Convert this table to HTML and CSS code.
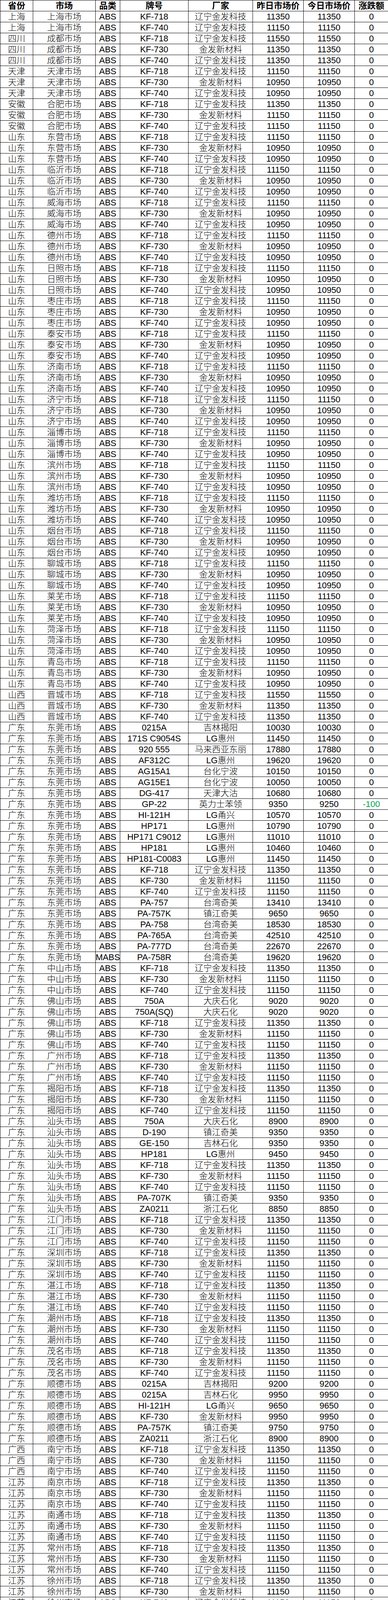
FILE: index.html
```html
<!DOCTYPE html>
<html lang="zh-CN">
<head>
<meta charset="utf-8">
<title>ABS 市场价格</title>
<link rel="stylesheet" href="styles.css">
</head>
<body>
<table class="sheet">
<colgroup><col class="c-prov"><col class="c-mkt"><col class="c-cat"><col class="c-grade"><col class="c-maker"><col class="c-price"><col class="c-price2"><col class="c-chg"></colgroup>
<thead>
<tr class="head"><th>省份</th><th>市场</th><th>品类</th><th>牌号</th><th>厂家</th><th>昨日市场价</th><th>今日市场价</th><th>涨跌额</th></tr>
</thead>
<tbody>
<tr><td>上海<td>上海市场<td>ABS<td>KF-718<td>辽宁金发科技<td>11350<td>11350<td>0
<tr><td>上海<td>上海市场<td>ABS<td>KF-740<td>辽宁金发科技<td>11150<td>11150<td>0
<tr><td>四川<td>成都市场<td>ABS<td>KF-718<td>辽宁金发科技<td>11550<td>11550<td>0
<tr><td>四川<td>成都市场<td>ABS<td>KF-730<td>金发新材料<td>11350<td>11350<td>0
<tr><td>四川<td>成都市场<td>ABS<td>KF-740<td>辽宁金发科技<td>11350<td>11350<td>0
<tr><td>天津<td>天津市场<td>ABS<td>KF-718<td>辽宁金发科技<td>11150<td>11150<td>0
<tr><td>天津<td>天津市场<td>ABS<td>KF-730<td>金发新材料<td>10950<td>10950<td>0
<tr><td>天津<td>天津市场<td>ABS<td>KF-740<td>辽宁金发科技<td>10950<td>10950<td>0
<tr><td>安徽<td>合肥市场<td>ABS<td>KF-718<td>辽宁金发科技<td>11350<td>11350<td>0
<tr><td>安徽<td>合肥市场<td>ABS<td>KF-730<td>金发新材料<td>11150<td>11150<td>0
<tr><td>安徽<td>合肥市场<td>ABS<td>KF-740<td>辽宁金发科技<td>11150<td>11150<td>0
<tr><td>山东<td>东营市场<td>ABS<td>KF-718<td>辽宁金发科技<td>11150<td>11150<td>0
<tr><td>山东<td>东营市场<td>ABS<td>KF-730<td>金发新材料<td>10950<td>10950<td>0
<tr><td>山东<td>东营市场<td>ABS<td>KF-740<td>辽宁金发科技<td>10950<td>10950<td>0
<tr><td>山东<td>临沂市场<td>ABS<td>KF-718<td>辽宁金发科技<td>11150<td>11150<td>0
<tr><td>山东<td>临沂市场<td>ABS<td>KF-730<td>金发新材料<td>10950<td>10950<td>0
<tr><td>山东<td>临沂市场<td>ABS<td>KF-740<td>辽宁金发科技<td>10950<td>10950<td>0
<tr><td>山东<td>威海市场<td>ABS<td>KF-718<td>辽宁金发科技<td>11150<td>11150<td>0
<tr><td>山东<td>威海市场<td>ABS<td>KF-730<td>金发新材料<td>10950<td>10950<td>0
<tr><td>山东<td>威海市场<td>ABS<td>KF-740<td>辽宁金发科技<td>10950<td>10950<td>0
<tr><td>山东<td>德州市场<td>ABS<td>KF-718<td>辽宁金发科技<td>11150<td>11150<td>0
<tr><td>山东<td>德州市场<td>ABS<td>KF-730<td>金发新材料<td>10950<td>10950<td>0
<tr><td>山东<td>德州市场<td>ABS<td>KF-740<td>辽宁金发科技<td>10950<td>10950<td>0
<tr><td>山东<td>日照市场<td>ABS<td>KF-718<td>辽宁金发科技<td>11150<td>11150<td>0
<tr><td>山东<td>日照市场<td>ABS<td>KF-730<td>金发新材料<td>10950<td>10950<td>0
<tr><td>山东<td>日照市场<td>ABS<td>KF-740<td>辽宁金发科技<td>10950<td>10950<td>0
<tr><td>山东<td>枣庄市场<td>ABS<td>KF-718<td>辽宁金发科技<td>11150<td>11150<td>0
<tr><td>山东<td>枣庄市场<td>ABS<td>KF-730<td>金发新材料<td>10950<td>10950<td>0
<tr><td>山东<td>枣庄市场<td>ABS<td>KF-740<td>辽宁金发科技<td>10950<td>10950<td>0
<tr><td>山东<td>泰安市场<td>ABS<td>KF-718<td>辽宁金发科技<td>11150<td>11150<td>0
<tr><td>山东<td>泰安市场<td>ABS<td>KF-730<td>金发新材料<td>10950<td>10950<td>0
<tr><td>山东<td>泰安市场<td>ABS<td>KF-740<td>辽宁金发科技<td>10950<td>10950<td>0
<tr><td>山东<td>济南市场<td>ABS<td>KF-718<td>辽宁金发科技<td>11150<td>11150<td>0
<tr><td>山东<td>济南市场<td>ABS<td>KF-730<td>金发新材料<td>10950<td>10950<td>0
<tr><td>山东<td>济南市场<td>ABS<td>KF-740<td>辽宁金发科技<td>10950<td>10950<td>0
<tr><td>山东<td>济宁市场<td>ABS<td>KF-718<td>辽宁金发科技<td>11150<td>11150<td>0
<tr><td>山东<td>济宁市场<td>ABS<td>KF-730<td>金发新材料<td>10950<td>10950<td>0
<tr><td>山东<td>济宁市场<td>ABS<td>KF-740<td>辽宁金发科技<td>10950<td>10950<td>0
<tr><td>山东<td>淄博市场<td>ABS<td>KF-718<td>辽宁金发科技<td>11150<td>11150<td>0
<tr><td>山东<td>淄博市场<td>ABS<td>KF-730<td>金发新材料<td>10950<td>10950<td>0
<tr><td>山东<td>淄博市场<td>ABS<td>KF-740<td>辽宁金发科技<td>10950<td>10950<td>0
<tr><td>山东<td>滨州市场<td>ABS<td>KF-718<td>辽宁金发科技<td>11150<td>11150<td>0
<tr><td>山东<td>滨州市场<td>ABS<td>KF-730<td>金发新材料<td>10950<td>10950<td>0
<tr><td>山东<td>滨州市场<td>ABS<td>KF-740<td>辽宁金发科技<td>10950<td>10950<td>0
<tr><td>山东<td>潍坊市场<td>ABS<td>KF-718<td>辽宁金发科技<td>11150<td>11150<td>0
<tr><td>山东<td>潍坊市场<td>ABS<td>KF-730<td>金发新材料<td>10950<td>10950<td>0
<tr><td>山东<td>潍坊市场<td>ABS<td>KF-740<td>辽宁金发科技<td>10950<td>10950<td>0
<tr><td>山东<td>烟台市场<td>ABS<td>KF-718<td>辽宁金发科技<td>11150<td>11150<td>0
<tr><td>山东<td>烟台市场<td>ABS<td>KF-730<td>金发新材料<td>10950<td>10950<td>0
<tr><td>山东<td>烟台市场<td>ABS<td>KF-740<td>辽宁金发科技<td>10950<td>10950<td>0
<tr><td>山东<td>聊城市场<td>ABS<td>KF-718<td>辽宁金发科技<td>11150<td>11150<td>0
<tr><td>山东<td>聊城市场<td>ABS<td>KF-730<td>金发新材料<td>10950<td>10950<td>0
<tr><td>山东<td>聊城市场<td>ABS<td>KF-740<td>辽宁金发科技<td>10950<td>10950<td>0
<tr><td>山东<td>莱芜市场<td>ABS<td>KF-718<td>辽宁金发科技<td>11150<td>11150<td>0
<tr><td>山东<td>莱芜市场<td>ABS<td>KF-730<td>金发新材料<td>10950<td>10950<td>0
<tr><td>山东<td>莱芜市场<td>ABS<td>KF-740<td>辽宁金发科技<td>10950<td>10950<td>0
<tr><td>山东<td>菏泽市场<td>ABS<td>KF-718<td>辽宁金发科技<td>11150<td>11150<td>0
<tr><td>山东<td>菏泽市场<td>ABS<td>KF-730<td>金发新材料<td>10950<td>10950<td>0
<tr><td>山东<td>菏泽市场<td>ABS<td>KF-740<td>辽宁金发科技<td>10950<td>10950<td>0
<tr><td>山东<td>青岛市场<td>ABS<td>KF-718<td>辽宁金发科技<td>11150<td>11150<td>0
<tr><td>山东<td>青岛市场<td>ABS<td>KF-730<td>金发新材料<td>10950<td>10950<td>0
<tr><td>山东<td>青岛市场<td>ABS<td>KF-740<td>辽宁金发科技<td>10950<td>10950<td>0
<tr><td>山西<td>晋城市场<td>ABS<td>KF-718<td>辽宁金发科技<td>11550<td>11550<td>0
<tr><td>山西<td>晋城市场<td>ABS<td>KF-730<td>金发新材料<td>11350<td>11350<td>0
<tr><td>山西<td>晋城市场<td>ABS<td>KF-740<td>辽宁金发科技<td>11350<td>11350<td>0
<tr><td>广东<td>东莞市场<td>ABS<td>0215A<td>吉林揭阳<td>10030<td>10030<td>0
<tr><td>广东<td>东莞市场<td>ABS<td>171S C9054S<td>LG惠州<td>11450<td>11450<td>0
<tr><td>广东<td>东莞市场<td>ABS<td>920 555<td>马来西亚东丽<td>17880<td>17880<td>0
<tr><td>广东<td>东莞市场<td>ABS<td>AF312C<td>LG惠州<td>19620<td>19620<td>0
<tr><td>广东<td>东莞市场<td>ABS<td>AG15A1<td>台化宁波<td>10150<td>10150<td>0
<tr><td>广东<td>东莞市场<td>ABS<td>AG15E1<td>台化宁波<td>10050<td>10050<td>0
<tr><td>广东<td>东莞市场<td>ABS<td>DG-417<td>天津大沽<td>10680<td>10680<td>0
<tr><td>广东<td>东莞市场<td>ABS<td>GP-22<td>英力士苯领<td>9350<td>9250<td class="down">-100
<tr><td>广东<td>东莞市场<td>ABS<td>HI-121H<td>LG甬兴<td>10570<td>10570<td>0
<tr><td>广东<td>东莞市场<td>ABS<td>HP171<td>LG惠州<td>10790<td>10790<td>0
<tr><td>广东<td>东莞市场<td>ABS<td>HP171 C9012<td>LG惠州<td>11010<td>11010<td>0
<tr><td>广东<td>东莞市场<td>ABS<td>HP181<td>LG惠州<td>10460<td>10460<td>0
<tr><td>广东<td>东莞市场<td>ABS<td>HP181-C0083<td>LG惠州<td>11450<td>11450<td>0
<tr><td>广东<td>东莞市场<td>ABS<td>KF-718<td>辽宁金发科技<td>11350<td>11350<td>0
<tr><td>广东<td>东莞市场<td>ABS<td>KF-730<td>金发新材料<td>11150<td>11150<td>0
<tr><td>广东<td>东莞市场<td>ABS<td>KF-740<td>辽宁金发科技<td>11150<td>11150<td>0
<tr><td>广东<td>东莞市场<td>ABS<td>PA-757<td>台湾奇美<td>13410<td>13410<td>0
<tr><td>广东<td>东莞市场<td>ABS<td>PA-757K<td>镇江奇美<td>9650<td>9650<td>0
<tr><td>广东<td>东莞市场<td>ABS<td>PA-758<td>台湾奇美<td>18530<td>18530<td>0
<tr><td>广东<td>东莞市场<td>ABS<td>PA-765A<td>台湾奇美<td>42510<td>42510<td>0
<tr><td>广东<td>东莞市场<td>ABS<td>PA-777D<td>台湾奇美<td>22670<td>22670<td>0
<tr><td>广东<td>东莞市场<td>MABS<td>PA-758R<td>台湾奇美<td>19620<td>19620<td>0
<tr><td>广东<td>中山市场<td>ABS<td>KF-718<td>辽宁金发科技<td>11350<td>11350<td>0
<tr><td>广东<td>中山市场<td>ABS<td>KF-730<td>金发新材料<td>11150<td>11150<td>0
<tr><td>广东<td>中山市场<td>ABS<td>KF-740<td>辽宁金发科技<td>11150<td>11150<td>0
<tr><td>广东<td>佛山市场<td>ABS<td>750A<td>大庆石化<td>9020<td>9020<td>0
<tr><td>广东<td>佛山市场<td>ABS<td>750A(SQ)<td>大庆石化<td>9020<td>9020<td>0
<tr><td>广东<td>佛山市场<td>ABS<td>KF-718<td>辽宁金发科技<td>11350<td>11350<td>0
<tr><td>广东<td>佛山市场<td>ABS<td>KF-730<td>金发新材料<td>11150<td>11150<td>0
<tr><td>广东<td>佛山市场<td>ABS<td>KF-740<td>辽宁金发科技<td>11150<td>11150<td>0
<tr><td>广东<td>广州市场<td>ABS<td>KF-718<td>辽宁金发科技<td>11350<td>11350<td>0
<tr><td>广东<td>广州市场<td>ABS<td>KF-730<td>金发新材料<td>11150<td>11150<td>0
<tr><td>广东<td>广州市场<td>ABS<td>KF-740<td>辽宁金发科技<td>11150<td>11150<td>0
<tr><td>广东<td>揭阳市场<td>ABS<td>KF-718<td>辽宁金发科技<td>11350<td>11350<td>0
<tr><td>广东<td>揭阳市场<td>ABS<td>KF-730<td>金发新材料<td>11150<td>11150<td>0
<tr><td>广东<td>揭阳市场<td>ABS<td>KF-740<td>辽宁金发科技<td>11150<td>11150<td>0
<tr><td>广东<td>汕头市场<td>ABS<td>750A<td>大庆石化<td>8900<td>8900<td>0
<tr><td>广东<td>汕头市场<td>ABS<td>D-190<td>镇江奇美<td>9350<td>9350<td>0
<tr><td>广东<td>汕头市场<td>ABS<td>GE-150<td>吉林石化<td>9350<td>9350<td>0
<tr><td>广东<td>汕头市场<td>ABS<td>HP181<td>LG惠州<td>9450<td>9450<td>0
<tr><td>广东<td>汕头市场<td>ABS<td>KF-718<td>辽宁金发科技<td>11350<td>11350<td>0
<tr><td>广东<td>汕头市场<td>ABS<td>KF-730<td>金发新材料<td>11150<td>11150<td>0
<tr><td>广东<td>汕头市场<td>ABS<td>KF-740<td>辽宁金发科技<td>11150<td>11150<td>0
<tr><td>广东<td>汕头市场<td>ABS<td>PA-707K<td>镇江奇美<td>9350<td>9350<td>0
<tr><td>广东<td>汕头市场<td>ABS<td>ZA0211<td>浙江石化<td>8850<td>8850<td>0
<tr><td>广东<td>江门市场<td>ABS<td>KF-718<td>辽宁金发科技<td>11350<td>11350<td>0
<tr><td>广东<td>江门市场<td>ABS<td>KF-730<td>金发新材料<td>11150<td>11150<td>0
<tr><td>广东<td>江门市场<td>ABS<td>KF-740<td>辽宁金发科技<td>11150<td>11150<td>0
<tr><td>广东<td>深圳市场<td>ABS<td>KF-718<td>辽宁金发科技<td>11350<td>11350<td>0
<tr><td>广东<td>深圳市场<td>ABS<td>KF-730<td>金发新材料<td>11150<td>11150<td>0
<tr><td>广东<td>深圳市场<td>ABS<td>KF-740<td>辽宁金发科技<td>11150<td>11150<td>0
<tr><td>广东<td>湛江市场<td>ABS<td>KF-718<td>辽宁金发科技<td>11350<td>11350<td>0
<tr><td>广东<td>湛江市场<td>ABS<td>KF-730<td>金发新材料<td>11150<td>11150<td>0
<tr><td>广东<td>湛江市场<td>ABS<td>KF-740<td>辽宁金发科技<td>11150<td>11150<td>0
<tr><td>广东<td>潮州市场<td>ABS<td>KF-718<td>辽宁金发科技<td>11350<td>11350<td>0
<tr><td>广东<td>潮州市场<td>ABS<td>KF-730<td>金发新材料<td>11150<td>11150<td>0
<tr><td>广东<td>潮州市场<td>ABS<td>KF-740<td>辽宁金发科技<td>11150<td>11150<td>0
<tr><td>广东<td>茂名市场<td>ABS<td>KF-718<td>辽宁金发科技<td>11350<td>11350<td>0
<tr><td>广东<td>茂名市场<td>ABS<td>KF-730<td>金发新材料<td>11150<td>11150<td>0
<tr><td>广东<td>茂名市场<td>ABS<td>KF-740<td>辽宁金发科技<td>11150<td>11150<td>0
<tr><td>广东<td>顺德市场<td>ABS<td>0215A<td>吉林揭阳<td>9200<td>9200<td>0
<tr><td>广东<td>顺德市场<td>ABS<td>0215A<td>吉林石化<td>9950<td>9950<td>0
<tr><td>广东<td>顺德市场<td>ABS<td>HI-121H<td>LG甬兴<td>9650<td>9650<td>0
<tr><td>广东<td>顺德市场<td>ABS<td>KF-730<td>金发新材料<td>9950<td>9950<td>0
<tr><td>广东<td>顺德市场<td>ABS<td>PA-757K<td>镇江奇美<td>9750<td>9750<td>0
<tr><td>广东<td>顺德市场<td>ABS<td>ZA0211<td>浙江石化<td>8900<td>8900<td>0
<tr><td>广西<td>南宁市场<td>ABS<td>KF-718<td>辽宁金发科技<td>11350<td>11350<td>0
<tr><td>广西<td>南宁市场<td>ABS<td>KF-730<td>金发新材料<td>11150<td>11150<td>0
<tr><td>广西<td>南宁市场<td>ABS<td>KF-740<td>辽宁金发科技<td>11150<td>11150<td>0
<tr><td>江苏<td>南京市场<td>ABS<td>KF-718<td>辽宁金发科技<td>11350<td>11350<td>0
<tr><td>江苏<td>南京市场<td>ABS<td>KF-730<td>金发新材料<td>11150<td>11150<td>0
<tr><td>江苏<td>南京市场<td>ABS<td>KF-740<td>辽宁金发科技<td>11150<td>11150<td>0
<tr><td>江苏<td>南通市场<td>ABS<td>KF-718<td>辽宁金发科技<td>11350<td>11350<td>0
<tr><td>江苏<td>南通市场<td>ABS<td>KF-730<td>金发新材料<td>11150<td>11150<td>0
<tr><td>江苏<td>南通市场<td>ABS<td>KF-740<td>辽宁金发科技<td>11150<td>11150<td>0
<tr><td>江苏<td>常州市场<td>ABS<td>KF-718<td>辽宁金发科技<td>11350<td>11350<td>0
<tr><td>江苏<td>常州市场<td>ABS<td>KF-730<td>金发新材料<td>11150<td>11150<td>0
<tr><td>江苏<td>常州市场<td>ABS<td>KF-740<td>辽宁金发科技<td>11150<td>11150<td>0
<tr><td>江苏<td>徐州市场<td>ABS<td>KF-718<td>辽宁金发科技<td>11350<td>11350<td>0
<tr><td>江苏<td>徐州市场<td>ABS<td>KF-730<td>金发新材料<td>11150<td>11150<td>0
<tr><td>江苏<td>徐州市场<td>ABS<td>KF-740<td>辽宁金发科技<td>11150<td>11150<td>0
<tr><td>江苏<td>无锡市场<td>ABS<td>KF-718<td>辽宁金发科技<td>11350<td>11350<td>0
<tr><td>江苏<td>无锡市场<td>ABS<td>KF-730<td>金发新材料<td>11150<td>11150<td>0
<tr><td>江苏<td>无锡市场<td>ABS<td>KF-740<td>辽宁金发科技<td>11150<td>11150<td>0
<tr><td>江苏<td>苏州市场<td>ABS<td>KF-718<td>辽宁金发科技<td>11350<td>11350<td>0
<tr><td>江苏<td>苏州市场<td>ABS<td>KF-730<td>金发新材料<td>11150<td>11150<td>0
<tr><td>江苏<td>苏州市场<td>ABS<td>KF-740<td>辽宁金发科技<td>11150<td>11150<td>0
<tr><td>河北<td>保定市场<td>ABS<td>KF-718<td>辽宁金发科技<td>11150<td>11150<td>0
<tr><td>河北<td>保定市场<td>ABS<td>KF-730<td>金发新材料<td>10950<td>10950<td>0
<tr><td>河北<td>保定市场<td>ABS<td>KF-740<td>辽宁金发科技<td>10950<td>10950<td>0
<tr><td>河北<td>唐山市场<td>ABS<td>KF-718<td>辽宁金发科技<td>11150<td>11150<td>0
<tr><td>河北<td>唐山市场<td>ABS<td>KF-730<td>金发新材料<td>10950<td>10950<td>0
<tr><td>河北<td>唐山市场<td>ABS<td>KF-740<td>辽宁金发科技<td>10950<td>10950<td>0
<tr><td>河北<td>廊坊市场<td>ABS<td>KF-718<td>辽宁金发科技<td>11150<td>11150<td>0
<tr><td>河北<td>廊坊市场<td>ABS<td>KF-730<td>金发新材料<td>10950<td>10950<td>0
<tr><td>河北<td>廊坊市场<td>ABS<td>KF-740<td>辽宁金发科技<td>10950<td>10950<td>0
<tr><td>河北<td>张家口市场<td>ABS<td>KF-718<td>辽宁金发科技<td>11150<td>11150<td>0
<tr><td>河北<td>张家口市场<td>ABS<td>KF-730<td>金发新材料<td>10950<td>10950<td>0
<tr><td>河北<td>张家口市场<td>ABS<td>KF-740<td>辽宁金发科技<td>10950<td>10950<td>0
<tr><td>河北<td>承德市场<td>ABS<td>KF-718<td>辽宁金发科技<td>11150<td>11150<td>0
<tr><td>河北<td>承德市场<td>ABS<td>KF-730<td>金发新材料<td>10950<td>10950<td>0
<tr><td>河北<td>承德市场<td>ABS<td>KF-740<td>辽宁金发科技<td>10950<td>10950<td>0
<tr><td>河北<td>沧州市场<td>ABS<td>KF-718<td>辽宁金发科技<td>11150<td>11150<td>0
<tr><td>河北<td>沧州市场<td>ABS<td>KF-730<td>金发新材料<td>10950<td>10950<td>0
<tr><td>河北<td>沧州市场<td>ABS<td>KF-740<td>辽宁金发科技<td>10950<td>10950<td>0
<tr><td>河北<td>石家庄市场<td>ABS<td>KF-718<td>辽宁金发科技<td>11150<td>11150<td>0
<tr><td>河北<td>石家庄市场<td>ABS<td>KF-730<td>金发新材料<td>10950<td>10950<td>0
<tr><td>河北<td>石家庄市场<td>ABS<td>KF-740<td>辽宁金发科技<td>10950<td>10950<td>0
<tr><td>河北<td>秦皇岛市场<td>ABS<td>KF-718<td>辽宁金发科技<td>11150<td>11150<td>0
<tr><td>河北<td>秦皇岛市场<td>ABS<td>KF-730<td>金发新材料<td>10950<td>10950<td>0
<tr><td>河北<td>秦皇岛市场<td>ABS<td>KF-740<td>辽宁金发科技<td>10950<td>10950<td>0
<tr><td>河北<td>衡水市场<td>ABS<td>KF-718<td>辽宁金发科技<td>11150<td>11150<td>0
<tr><td>河北<td>衡水市场<td>ABS<td>KF-730<td>金发新材料<td>10950<td>10950<td>0
<tr><td>河北<td>衡水市场<td>ABS<td>KF-740<td>辽宁金发科技<td>10950<td>10950<td>0
<tr><td>河北<td>邢台市场<td>ABS<td>KF-718<td>辽宁金发科技<td>11150<td>11150<td>0
<tr><td>河北<td>邢台市场<td>ABS<td>KF-730<td>金发新材料<td>10950<td>10950<td>0
<tr><td>河北<td>邢台市场<td>ABS<td>KF-740<td>辽宁金发科技<td>10950<td>10950<td>0
<tr><td>河北<td>邯郸市场<td>ABS<td>KF-718<td>辽宁金发科技<td>11150<td>11150<td>0
<tr><td>河北<td>邯郸市场<td>ABS<td>KF-730<td>金发新材料<td>10950<td>10950<td>0
<tr><td>河北<td>邯郸市场<td>ABS<td>KF-740<td>辽宁金发科技<td>10950<td>10950<td>0
<tr><td>河南<td>新乡市场<td>ABS<td>KF-718<td>辽宁金发科技<td>11550<td>11550<td>0
<tr><td>河南<td>新乡市场<td>ABS<td>KF-730<td>金发新材料<td>11350<td>11350<td>0
<tr><td>河南<td>新乡市场<td>ABS<td>KF-740<td>辽宁金发科技<td>11350<td>11350<td>0
<tr><td>河南<td>洛阳市场<td>ABS<td>KF-718<td>辽宁金发科技<td>11550<td>11550<td>0
<tr><td>河南<td>洛阳市场<td>ABS<td>KF-730<td>金发新材料<td>11350<td>11350<td>0
<tr><td>河南<td>洛阳市场<td>ABS<td>KF-740<td>辽宁金发科技<td>11350<td>11350<td>0
<tr><td>河南<td>濮阳市场<td>ABS<td>KF-718<td>辽宁金发科技<td>11550<td>11550<td>0
<tr><td>河南<td>濮阳市场<td>ABS<td>KF-730<td>金发新材料<td>11350<td>11350<td>0
<tr><td>河南<td>濮阳市场<td>ABS<td>KF-740<td>辽宁金发科技<td>11350<td>11350<td>0
<tr><td>河南<td>郑州市场<td>ABS<td>KF-718<td>辽宁金发科技<td>11550<td>11550<td>0
<tr><td>河南<td>郑州市场<td>ABS<td>KF-730<td>金发新材料<td>11350<td>11350<td>0
<tr><td>河南<td>郑州市场<td>ABS<td>KF-740<td>辽宁金发科技<td>11350<td>11350<td>0
<tr><td>浙江<td>余姚市场<td>ABS<td>0215A<td>吉林石化<td>9500<td>9480<td class="down">-20
<tr><td>浙江<td>余姚市场<td>ABS<td>275<td>上海高桥<td>9300<td>9350<td class="up">50
<tr><td>浙江<td>余姚市场<td>ABS<td>275<td>华锦化工<td>9350<td>9350<td>0
<tr><td>浙江<td>余姚市场<td>ABS<td>750A(SQ)<td>大庆石化<td>8750<td>8750<td>0
<tr><td>浙江<td>余姚市场<td>ABS<td>750SW<td>韩国锦湖<td>10450<td>10450<td>0
<tr><td>浙江<td>余姚市场<td>ABS<td>8391<td>上海高桥<td>9850<td>9850<td>0
<tr><td>浙江<td>余姚市场<td>ABS<td>AG12A1<td>宁波台化<td>10550<td>10550<td>0
<tr><td>浙江<td>余姚市场<td>ABS<td>AG15A1<td>台化宁波<td>10200<td>10200<td>0
<tr><td>浙江<td>余姚市场<td>ABS<td>AG15E1<td>台化宁波<td>10150<td>10150<td>0
<tr><td>浙江<td>余姚市场<td>ABS<td>DG-417<td>天津大沽<td>9450<td>9450<td>0
<tr><td>浙江<td>余姚市场<td>ABS<td>GE-150<td>吉林石化<td>9200<td>9200<td>0
<tr><td>浙江<td>余姚市场<td>ABS<td>GP-22<td>英力士苯领<td>9550<td>9550<td>0
<tr><td>浙江<td>余姚市场<td>ABS<td>HI-121H<td>LG甬兴<td>9700<td>9700<td>0
<tr><td>浙江<td>余姚市场<td>ABS<td>HJ15A<td>山东海江<td>8980<td>8980<td>0
<tr><td>浙江<td>余姚市场<td>ABS<td>KF-730<td>金发新材料<td>9550<td>9550<td>0
<tr><td>浙江<td>余姚市场<td>ABS<td>M347<td>利华益利津<td>8890<td>8890<td>0
<tr><td>浙江<td>余姚市场<td>ABS<td>PA-707K<td>镇江奇美<td>9700<td>9700<td>0
<tr><td>浙江<td>余姚市场<td>ABS<td>PA-757K<td>镇江奇美<td>10000<td>10000<td>0
<tr><td>浙江<td>余姚市场<td>ABS<td>ZA0210<td>浙江石化<td>9400<td>9400<td>0
<tr><td>浙江<td>余姚市场<td>ABS<td>ZA0211<td>浙江石化<td>8850<td>8900<td class="up">50
<tr><td>浙江<td>余姚市场<td>MABS<td>275<td>华锦化工<td>9350<td>9350<td>0
<tr><td>浙江<td>台州市场<td>ABS<td>KF-718<td>辽宁金发科技<td>11350<td>11350<td>0
<tr><td>浙江<td>台州市场<td>ABS<td>KF-730<td>金发新材料<td>11150<td>11150<td>0
<tr><td>浙江<td>台州市场<td>ABS<td>KF-740<td>辽宁金发科技<td>11150<td>11150<td>0
<tr><td>浙江<td>宁波市场<td>ABS<td>KF-718<td>辽宁金发科技<td>11350<td>11350<td>0
<tr><td>浙江<td>宁波市场<td>ABS<td>KF-730<td>金发新材料<td>11150<td>11150<td>0
<tr><td>浙江<td>宁波市场<td>ABS<td>KF-740<td>辽宁金发科技<td>11150<td>11150<td>0
<tr><td>浙江<td>杭州市场<td>ABS<td>KF-718<td>辽宁金发科技<td>11350<td>11350<td>0
<tr><td>浙江<td>杭州市场<td>ABS<td>KF-730<td>金发新材料<td>11150<td>11150<td>0
<tr><td>浙江<td>杭州市场<td>ABS<td>KF-740<td>辽宁金发科技<td>11150<td>11150<td>0
<tr><td>浙江<td>温州市场<td>ABS<td>KF-718<td>辽宁金发科技<td>11350<td>11350<td>0
<tr><td>浙江<td>温州市场<td>ABS<td>KF-730<td>金发新材料<td>11150<td>11150<td>0
<tr><td>浙江<td>温州市场<td>ABS<td>KF-740<td>辽宁金发科技<td>11150<td>11150<td>0
<tr><td>浙江<td>绍兴市场<td>ABS<td>KF-718<td>辽宁金发科技<td>11350<td>11350<td>0
<tr><td>浙江<td>绍兴市场<td>ABS<td>KF-730<td>金发新材料<td>11150<td>11150<td>0
<tr><td>浙江<td>绍兴市场<td>ABS<td>KF-740<td>辽宁金发科技<td>11150<td>11150<td>0
<tr><td>湖北<td>武汉市场<td>ABS<td>KF-718<td>辽宁金发科技<td>11550<td>11550<td>0
<tr><td>湖北<td>武汉市场<td>ABS<td>KF-730<td>金发新材料<td>11350<td>11350<td>0
<tr><td>湖北<td>武汉市场<td>ABS<td>KF-740<td>辽宁金发科技<td>11350<td>11350<td>0
<tr><td>湖南<td>长沙市场<td>ABS<td>KF-718<td>辽宁金发科技<td>11550<td>11550<td>0
<tr><td>湖南<td>长沙市场<td>ABS<td>KF-730<td>金发新材料<td>11350<td>11350<td>0
<tr><td>湖南<td>长沙市场<td>ABS<td>KF-740<td>辽宁金发科技<td>11350<td>11350<td>0
<tr><td>甘肃<td>兰州市场<td>ABS<td>KF-718<td>辽宁金发科技<td>11550<td>11550<td>0
<tr><td>甘肃<td>兰州市场<td>ABS<td>KF-730<td>金发新材料<td>11350<td>11350<td>0
<tr><td>甘肃<td>兰州市场<td>ABS<td>KF-740<td>辽宁金发科技<td>11350<td>11350<td>0
<tr><td>甘肃<td>庆阳市场<td>ABS<td>KF-718<td>辽宁金发科技<td>11550<td>11550<td>0
<tr><td>甘肃<td>庆阳市场<td>ABS<td>KF-730<td>金发新材料<td>11350<td>11350<td>0
<tr><td>甘肃<td>庆阳市场<td>ABS<td>KF-740<td>辽宁金发科技<td>11350<td>11350<td>0
<tr><td>福建<td>厦门市场<td>ABS<td>0215A<td>广东石化<td>9450<td>9450<td>0
<tr><td>福建<td>厦门市场<td>ABS<td>KF-718<td>辽宁金发科技<td>11350<td>11350<td>0
<tr><td>福建<td>厦门市场<td>ABS<td>KF-730<td>金发新材料<td>11150<td>11150<td>0
<tr><td>福建<td>厦门市场<td>ABS<td>KF-740<td>辽宁金发科技<td>11150<td>11150<td>0
<tr><td>福建<td>泉州市场<td>ABS<td>KF-718<td>辽宁金发科技<td>11350<td>11350<td>0
<tr><td>福建<td>泉州市场<td>ABS<td>KF-730<td>金发新材料<td>11150<td>11150<td>0
<tr><td>福建<td>泉州市场<td>ABS<td>KF-740<td>辽宁金发科技<td>11150<td>11150<td>0
<tr><td>福建<td>漳州市场<td>ABS<td>KF-718<td>辽宁金发科技<td>11350<td>11350<td>0
<tr><td>福建<td>漳州市场<td>ABS<td>KF-730<td>金发新材料<td>11150<td>11150<td>0
<tr><td>福建<td>漳州市场<td>ABS<td>KF-740<td>辽宁金发科技<td>11150<td>11150<td>0
<tr><td>福建<td>福州市场<td>ABS<td>KF-718<td>辽宁金发科技<td>11350<td>11350<td>0
<tr><td>福建<td>福州市场<td>ABS<td>KF-730<td>金发新材料<td>11150<td>11150<td>0
<tr><td>福建<td>福州市场<td>ABS<td>KF-740<td>辽宁金发科技<td>11150<td>11150<td>0
<tr><td>重庆<td>重庆市场<td>ABS<td>KF-718<td>辽宁金发科技<td>11550<td>11550<td>0
<tr><td>重庆<td>重庆市场<td>ABS<td>KF-730<td>金发新材料<td>11350<td>11350<td>0
<tr><td>重庆<td>重庆市场<td>ABS<td>KF-740<td>辽宁金发科技<td>11350<td>11350<td>0
<tr><td>陕西<td>西安市场<td>ABS<td>KF-718<td>辽宁金发科技<td>11550<td>11550<td>0
<tr><td>陕西<td>西安市场<td>ABS<td>KF-730<td>金发新材料<td>11350<td>11350<td>0
<tr><td>陕西<td>西安市场<td>ABS<td>KF-740<td>辽宁金发科技<td>11350<td>11350<td>0
</tbody>
</table>
</body>
</html>
```
FILE: styles.css
```css
html, body {
  margin: 0;
  padding: 0;
  background: #fff;
}

.sheet {
  border-collapse: collapse;
  table-layout: fixed;
  width: 994px;
  font-family: "Liberation Sans", "Noto Sans CJK SC", sans-serif;
  font-size: 22px;
  color: #000;
}

.c-prov { width: 84px; }
.c-mkt { width: 160px; }
.c-cat { width: 63px; }
.c-grade { width: 175px; }
.c-maker { width: 165px; }
.c-price { width: 130px; }
.c-price2 { width: 131px; }
.c-chg { width: 86px; }

.sheet tr {
  height: 28px;
}

.sheet th,
.sheet td {
  border: 1px solid #000;
  padding: 0;
  line-height: 24px;
  text-align: center;
  vertical-align: middle;
  white-space: nowrap;
}

.sheet th {
  font-weight: 700;
}

.sheet td {
  font-weight: 300;
}

.sheet td.down {
  color: #00a650;
}

.sheet td.up {
  color: #ff0000;
}
```
